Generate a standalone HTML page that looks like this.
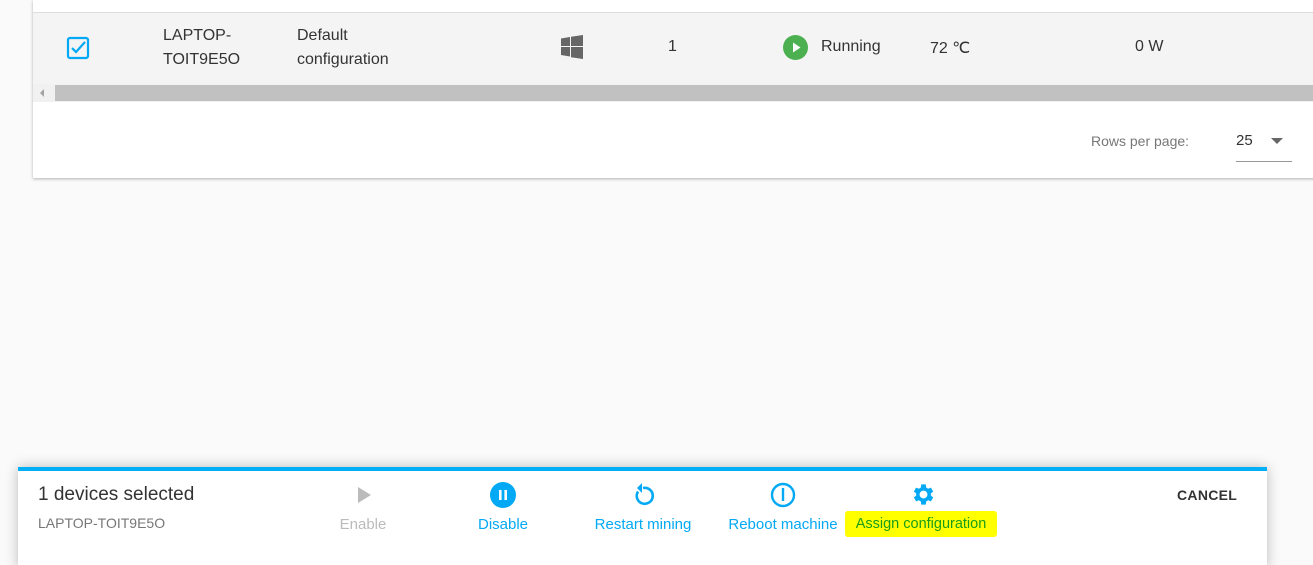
<!DOCTYPE html>
<html style="overflow:hidden;width:1313px;height:565px"><head><style>
body{margin:0;width:1313px;height:565px;background:#fafafa;font-family:"Liberation Sans",Arial,sans-serif;position:relative;overflow:hidden;color:#333}
.abs{position:absolute}
.card{left:33px;top:0;width:1290px;height:178px;background:#fff;box-shadow:0 1px 3px rgba(0,0,0,.3)}
.row{left:33px;top:12px;width:1290px;height:72px;background:#f4f4f4;border-top:1px solid #ddd}
.t{font-size:16px;color:#333}
.panel{left:18px;top:467px;width:1249px;height:98px;background:#fff;border-top:4px solid #03b0f5;box-shadow:0 0 12px rgba(0,0,0,.25)}
.lbl{font-size:15px;color:#03a9f4;text-align:center;width:140px}
</style></head><body>
<div class="abs card"></div>
<div class="abs row"></div>
<svg class="abs" style="left:66px;top:36px" width="25" height="25" viewBox="0 0 25 25"><rect x="2" y="2" width="20" height="20" rx="2" fill="none" stroke="#03a9f4" stroke-width="2.2"/><path d="M6 12l4 4 9-10" fill="none" stroke="#03a9f4" stroke-width="2.2"/></svg>
<div class="abs t" style="left:163px;top:24px;line-height:24px">LAPTOP-<br>TOIT9E5O</div>
<div class="abs t" style="left:297px;top:24px;line-height:24px">Default<br>configuration</div>
<svg class="abs" style="left:561px;top:35px" width="22" height="24" viewBox="0 0 22 24"><path d="M0 3.5L9 2v9H0zM10 1.8L22 0v11H10zM0 12h9v9.5L0 20zM10 12h12v12L10 22.2z" fill="#666"/></svg>
<div class="abs t" style="left:668px;top:38px">1</div>
<svg class="abs" style="left:783px;top:35px" width="25" height="25"><circle cx="12.5" cy="12.5" r="12.5" fill="#4caf50"/><path d="M10 7.5v10l7.5-5z" fill="#fff"/></svg>
<div class="abs t" style="left:821px;top:38px">Running</div>
<div class="abs t" style="left:930px;top:38px">72 ℃</div>
<div class="abs t" style="left:1135px;top:38px">0 W</div>
<div class="abs" style="left:33px;top:84px;width:1290px;height:18px;background:#f1f1f1"></div>
<div class="abs" style="left:55px;top:85px;width:1258px;height:16px;background:#c1c1c1"></div>
<div class="abs" style="left:40px;top:89px;width:0;height:0;border-top:4px solid transparent;border-bottom:4px solid transparent;border-right:4px solid #a3a3a3"></div>
<div class="abs" style="left:1091px;top:133px;font-size:14px;color:#777">Rows per page:</div>
<div class="abs" style="left:1236px;top:132px;font-size:15px;color:#333">25</div>
<div class="abs" style="left:1271px;top:138px;width:0;height:0;border-left:6px solid transparent;border-right:6px solid transparent;border-top:6px solid #666"></div>
<div class="abs" style="left:1236px;top:161px;width:56px;height:1px;background:#999"></div>

<div class="abs panel"></div>
<div class="abs" style="left:38px;top:484px;font-size:19px;color:#333">1 devices selected</div>
<div class="abs" style="left:38px;top:515px;font-size:14px;color:#777">LAPTOP-TOIT9E5O</div>
<svg class="abs" style="left:356px;top:485px" width="18" height="20"><path d="M2 2v16l13-8z" fill="#bbb"/></svg>
<div class="abs lbl" style="left:293px;top:516px;color:#bbb">Enable</div>
<svg class="abs" style="left:490px;top:482px" width="26" height="26"><circle cx="13" cy="13" r="13" fill="#03a9f4"/><rect x="9" y="8" width="2.6" height="10" fill="#fff"/><rect x="14.4" y="8" width="2.6" height="10" fill="#fff"/></svg>
<div class="abs lbl" style="left:433px;top:516px">Disable</div>
<svg class="abs" style="left:630px;top:482px" width="26" height="26" viewBox="0 0 26 26"><path d="M8 9.5A8 8 0 1 0 13 6" fill="none" stroke="#03a9f4" stroke-width="2.6"/><path d="M12 1v10l-5-5z" fill="#03a9f4"/></svg>
<div class="abs lbl" style="left:573px;top:516px">Restart mining</div>
<svg class="abs" style="left:770px;top:482px" width="26" height="26"><circle cx="13" cy="13" r="11" fill="none" stroke="#03a9f4" stroke-width="2.4"/><rect x="11.8" y="6" width="2.4" height="13" fill="#03a9f4"/></svg>
<div class="abs lbl" style="left:713px;top:516px">Reboot machine</div>
<svg class="abs" style="left:909px;top:481px" width="27" height="27" viewBox="0 0 24 24"><path fill="#03a9f4" d="M19.4 13a7.5 7.5 0 0 0 0-2l2.1-1.6-2-3.5-2.5 1a7 7 0 0 0-1.7-1L14.9 3h-4l-.4 2.9a7 7 0 0 0-1.7 1l-2.5-1-2 3.5L6.4 11a7.5 7.5 0 0 0 0 2l-2.1 1.6 2 3.5 2.5-1a7 7 0 0 0 1.7 1l.4 2.9h4l.4-2.9a7 7 0 0 0 1.7-1l2.5 1 2-3.5zM12.9 15.5a3.5 3.5 0 1 1 0-7 3.5 3.5 0 0 1 0 7z"/></svg>
<div class="abs" style="left:845px;top:511px;width:152px;height:26px;background:#ffff00;border-radius:3px"></div>
<div class="abs" style="left:845px;top:516px;width:152px;text-align:center;font-size:14.5px;color:#1a9e1a;white-space:nowrap">Assign configuration</div>
<div class="abs" style="left:1177px;top:487px;font-size:14px;color:#333;font-weight:bold;letter-spacing:.3px">CANCEL</div>
</body></html>
